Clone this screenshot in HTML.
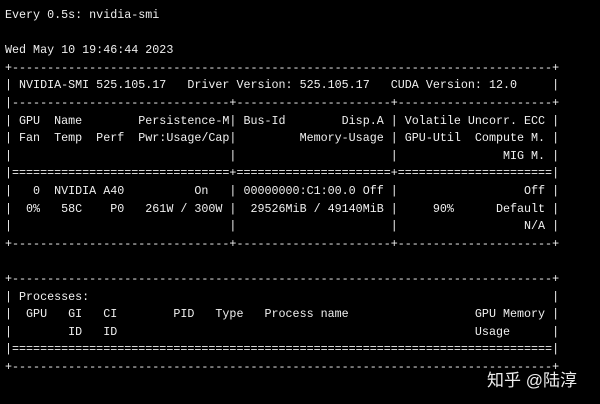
<!DOCTYPE html>
<html><head><meta charset="utf-8"><style>
html,body{margin:0;padding:0;background:#000;width:600px;height:404px;overflow:hidden}
pre{position:absolute;left:5px;top:7px;margin:0;font-family:"Liberation Mono",monospace;font-size:11.7px;line-height:17.6px;color:#f0f0f0}
.wm{position:absolute;left:487px;top:366px;font-family:"Liberation Sans","Noto Sans CJK SC",sans-serif;font-size:17px;color:#eee}
</style></head><body>
<pre>Every 0.5s: nvidia-smi

Wed May 10 19:46:44 2023
+-----------------------------------------------------------------------------+
| NVIDIA-SMI 525.105.17   Driver Version: 525.105.17   CUDA Version: 12.0     |
|-------------------------------+----------------------+----------------------+
| GPU  Name        Persistence-M| Bus-Id        Disp.A | Volatile Uncorr. ECC |
| Fan  Temp  Perf  Pwr:Usage/Cap|         Memory-Usage | GPU-Util  Compute M. |
|                               |                      |               MIG M. |
|===============================+======================+======================|
|   0  NVIDIA A40          On   | 00000000:C1:00.0 Off |                  Off |
|  0%   58C    P0   261W / 300W |  29526MiB / 49140MiB |     90%      Default |
|                               |                      |                  N/A |
+-------------------------------+----------------------+----------------------+

+-----------------------------------------------------------------------------+
| Processes:                                                                  |
|  GPU   GI   CI        PID   Type   Process name                  GPU Memory |
|        ID   ID                                                   Usage      |
|=============================================================================|
+-----------------------------------------------------------------------------+</pre>
<div class="wm">知乎 @陆淳</div>
</body></html>
